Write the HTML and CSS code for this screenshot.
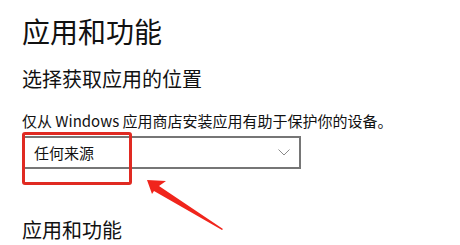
FILE: index.html
```html
<!DOCTYPE html>
<html lang="zh-CN">
<head>
<meta charset="utf-8">
<link rel="stylesheet" href="styles.css">
</head>
<body>
<main class="page">
  <h1 class="title">应用和功能</h1>
  <h2 class="subtitle">选择获取应用的位置</h2>
  <p class="desc">仅从 Windows 应用商店安装应用有助于保护你的设备。</p>
  <div class="select-wrap">
    <div class="select">
      <span class="select-text">任何来源</span>
      <svg class="chevron" width="12" height="7" viewBox="0 0 12 7"><path d="M0.5 0.5 L6 6 L11.5 0.5" fill="none" stroke="#8a8a8a" stroke-width="1"/></svg>
    </div>
    <div class="highlight"></div>
  </div>
  <h2 class="section">应用和功能</h2>
  <svg class="arrow" width="90" height="60" viewBox="0 0 90 60">
    <polygon points="2,2 21,3 14,8 78,51 77,52 9,13 7,16" fill="#f0251c"/>
  </svg>
</main>
</body>
</html>
```
FILE: styles.css
```css
html, body {
  margin: 0;
  padding: 0;
  background: #ffffff;
}
.page {
  position: relative;
  width: 460px;
  height: 245px;
  overflow: hidden;
  padding: 0 0 0 22px;
  box-sizing: border-box;
  font-family: "Noto Sans CJK SC", "Noto Sans", sans-serif;
  color: #111111;
}
.title {
  margin: 0;
  padding-top: 15px;
  font-size: 28px;
  line-height: 32px;
  font-weight: 400;
}
.subtitle {
  margin: 0;
  padding-top: 20px;
  font-size: 20px;
  line-height: 24px;
  font-weight: 400;
}
.desc {
  margin: 0;
  padding-top: 20px;
  font-size: 15px;
  line-height: 20px;
}
.select-wrap {
  position: relative;
  margin-top: 5px;
  width: 279px;
}
.select {
  display: flex;
  align-items: center;
  justify-content: space-between;
  box-sizing: border-box;
  width: 279px;
  height: 33px;
  border: 2px solid #767676;
  padding: 0 9px 0 10px;
}
.select-text {
  font-size: 15px;
  line-height: 20px;
}
.chevron {
  display: block;
}
.highlight {
  position: absolute;
  left: 0;
  top: -4px;
  width: 110px;
  height: 53px;
  box-sizing: border-box;
  border: 3px solid #e02a22;
  border-radius: 3px;
}
.section {
  margin: 0;
  padding-top: 50px;
  font-size: 20px;
  line-height: 22px;
  font-weight: 400;
}
.arrow {
  position: absolute;
  left: 145px;
  top: 178px;
}
```
